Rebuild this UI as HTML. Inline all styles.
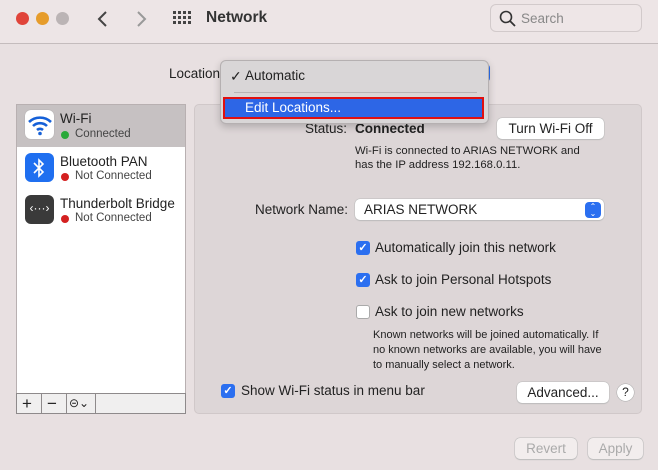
<!DOCTYPE html>
<html><head><style>
*{margin:0;padding:0;box-sizing:border-box}
body{width:658px;height:470px;background:#e8e0e1;font-family:"Liberation Sans",sans-serif;font-size:13.5px;color:#222;position:relative;overflow:hidden}
.a{position:absolute}
.dot{width:13px;height:13px;border-radius:50%;top:12px}
.cb{width:14px;height:14px;border-radius:3px;background:#2b6ff0;color:#fff;font-size:11px;line-height:14px;text-align:center;font-weight:bold}
.cbo{width:14px;height:14px;border-radius:3px;background:#fff;border:1px solid #aaa}
.btn{background:#fff;border-radius:5px;box-shadow:0 0 0 .5px #bbb,0 1px 1px #bbb;text-align:center;height:21px;line-height:21px}
.sd{width:8px;height:8px;border-radius:50%}
</style></head><body>
<div class="a" style="left:0;top:0;width:658px;height:44px;background:#ede5e6;border-bottom:1px solid #c4bcbd"></div>
<div class="a dot" style="left:16px;background:#e0443a"></div>
<div class="a dot" style="left:36px;background:#e69c2b"></div>
<div class="a dot" style="left:56px;background:#bbb4b5"></div>
<svg class="a" style="left:96px;top:10px" width="14" height="18"><path d="M10 2L3 9l7 7" stroke="#444" stroke-width="2" fill="none"/></svg>
<svg class="a" style="left:134px;top:10px" width="14" height="18"><path d="M4 2l7 7-7 7" stroke="#999" stroke-width="2" fill="none"/></svg>
<svg class="a" style="left:173px;top:11px" width="18" height="14"><g fill="#444"><rect x="0" y="0" width="3" height="3"/><rect x="5" y="0" width="3" height="3"/><rect x="10" y="0" width="3" height="3"/><rect x="15" y="0" width="3" height="3"/><rect x="0" y="5" width="3" height="3"/><rect x="5" y="5" width="3" height="3"/><rect x="10" y="5" width="3" height="3"/><rect x="15" y="5" width="3" height="3"/><rect x="0" y="10" width="3" height="3"/><rect x="5" y="10" width="3" height="3"/><rect x="10" y="10" width="3" height="3"/><rect x="15" y="10" width="3" height="3"/></g></svg>
<div class="a" style="left:206px;top:9px;font-size:15.5px;font-weight:bold;color:#333">Network</div>
<div class="a" style="left:490px;top:4px;width:152px;height:28px;border:1px solid #d2cacb;border-radius:6px;background:#eee6e7"></div>
<svg class="a" style="left:499px;top:10px" width="18" height="18"><circle cx="7" cy="7" r="5.5" stroke="#333" stroke-width="1.6" fill="none"/><path d="M11 11l5 5" stroke="#333" stroke-width="1.8"/></svg>
<div class="a" style="left:521px;top:11px;color:#888">Search</div>
<div class="a" style="left:169px;top:66px">Location</div>
<div class="a" style="left:16px;top:104px;width:170px;height:310px;background:#fff;border:1px solid #b8b0b1"></div>
<div class="a" style="left:17px;top:105px;width:168px;height:42px;background:#c6c1c2"></div>
<div class="a" style="left:25px;top:110px;width:29px;height:29px;border-radius:6px;background:#fff;box-shadow:0 0 1px #999"></div>
<svg class="a" style="left:27px;top:114px" width="26" height="22"><g stroke="#1560d8" stroke-width="2.6" fill="none"><path d="M2 8a16 16 0 0 1 22 0"/><path d="M6 12a10 10 0 0 1 14 0"/><path d="M10 16a4.5 4.5 0 0 1 6 0"/></g><circle cx="13" cy="19.5" r="1.8" fill="#1560d8"/></svg>
<div class="a" style="left:60px;top:111px">Wi-Fi</div>
<div class="a sd" style="left:61px;top:131px;background:#2aa93a"></div>
<div class="a" style="left:75px;top:128px;font-size:11.5px;color:#444">Connected</div>
<div class="a" style="left:25px;top:153px;width:29px;height:29px;border-radius:6px;background:#1f6ff0"></div>
<svg class="a" style="left:31px;top:157px" width="16" height="22"><path d="M3 6l9 9-4 4V3l4 4-9 9" stroke="#fff" stroke-width="1.6" fill="none"/></svg>
<div class="a" style="left:60px;top:154px">Bluetooth PAN</div>
<div class="a sd" style="left:61px;top:173px;background:#d42020"></div>
<div class="a" style="left:75px;top:170px;font-size:11.5px;color:#444">Not Connected</div>
<div class="a" style="left:25px;top:195px;width:29px;height:29px;border-radius:6px;background:#3a3a3a"></div>
<div class="a" style="left:25px;top:201px;width:29px;text-align:center;color:#fff;font-size:12px">‹···›</div>
<div class="a" style="left:60px;top:196px">Thunderbolt Bridge</div>
<div class="a sd" style="left:61px;top:215px;background:#d42020"></div>
<div class="a" style="left:75px;top:212px;font-size:11.5px;color:#444">Not Connected</div>
<div class="a" style="left:16px;top:393px;width:170px;height:21px;border:1px solid #8e8a8b;background:#f0efef"></div>
<div class="a" style="left:41px;top:394px;width:1px;height:19px;background:#8e8a8b"></div>
<div class="a" style="left:66px;top:394px;width:1px;height:19px;background:#8e8a8b"></div>
<div class="a" style="left:95px;top:394px;width:1px;height:19px;background:#8e8a8b"></div>
<div class="a" style="left:22px;top:394px;font-size:17px">+</div>
<div class="a" style="left:47px;top:394px;font-size:17px">−</div>
<div class="a" style="left:69px;top:396px;font-size:12px">⊝⌄</div>
<div class="a" style="left:194px;top:104px;width:448px;height:310px;background:#ddd6d7;border:1px solid #d0c8c9;border-radius:5px"></div>
<div class="a" style="left:305px;top:121px">Status:</div>
<div class="a" style="left:355px;top:121px;font-weight:bold">Connected</div>
<div class="a btn" style="left:497px;top:118px;width:107px">Turn Wi-Fi Off</div>
<div class="a" style="left:355px;top:144px;font-size:11.3px;line-height:14px">Wi-Fi is connected to ARIAS NETWORK and<br>has the IP address 192.168.0.11.</div>
<div class="a" style="left:255px;top:202px">Network Name:</div>
<div class="a btn" style="left:355px;top:199px;width:249px;text-align:left;padding-left:9px">ARIAS NETWORK</div>
<div class="a" style="left:585px;top:202px;width:16px;height:16px;border-radius:4px;background:#2b6ff0;color:#fff;font-size:8px;line-height:7px;text-align:center;padding-top:1px">⌃<br>⌄</div>
<div class="a cb" style="left:356px;top:241px">✓</div><div class="a" style="left:375px;top:240px">Automatically join this network</div>
<div class="a cb" style="left:356px;top:273px">✓</div><div class="a" style="left:375px;top:272px">Ask to join Personal Hotspots</div>
<div class="a cbo" style="left:356px;top:305px"></div><div class="a" style="left:375px;top:304px">Ask to join new networks</div>
<div class="a" style="left:373px;top:328px;font-size:11px;line-height:15px">Known networks will be joined automatically. If<br>no known networks are available, you will have<br>to manually select a network.</div>
<div class="a cb" style="left:221px;top:384px">✓</div><div class="a" style="left:241px;top:383px">Show Wi-Fi status in menu bar</div>
<div class="a btn" style="left:517px;top:382px;width:92px">Advanced...</div>
<div class="a" style="left:617px;top:384px;width:17px;height:17px;border-radius:50%;background:#fff;box-shadow:0 0 0 .5px #aaa;text-align:center;line-height:17px;font-size:12px">?</div>
<div class="a btn" style="left:515px;top:438px;width:62px;color:#aaa;background:#f2eded">Revert</div>
<div class="a btn" style="left:588px;top:438px;width:55px;color:#aaa;background:#f2eded">Apply</div>
<div class="a" style="left:476px;top:64px;width:14px;height:18px;background:#2b6ff0;border-radius:4px"></div>
<div class="a" style="left:220px;top:60px;width:269px;height:64px;background:#d9d6d7;border:1px solid #b5b0b1;border-radius:6px;box-shadow:0 3px 8px rgba(0,0,0,.2)"></div>
<div class="a" style="left:230px;top:68px;font-size:14px">✓</div>
<div class="a" style="left:245px;top:68px">Automatic</div>
<div class="a" style="left:234px;top:92px;width:243px;height:1px;background:#b8b3b4"></div>
<div class="a" style="left:223px;top:97px;width:261px;height:22px;background:#2d66e6;border:2px solid #e01010"></div>
<div class="a" style="left:245px;top:100px;color:#fff">Edit Locations...</div>
</body></html>
